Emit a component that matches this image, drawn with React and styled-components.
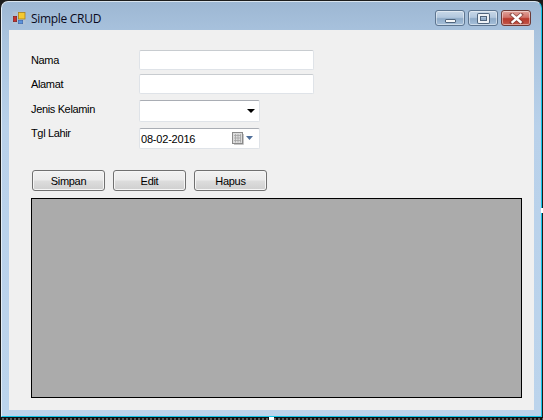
import React from "react";
import styled, { createGlobalStyle } from "styled-components";

const Global = createGlobalStyle`
  html, body { margin: 0; padding: 0; background: #0b0b0b; }
  * { box-sizing: border-box; }
`;

const Screen = styled.div`
  position: relative;
  width: 543px;
  height: 420px;
  overflow: hidden;
  display: flex;
  flex-direction: column;
  background: #1c1c1c;
  font-family: "Liberation Sans", Arial, sans-serif;
`;

const Window = styled.div`
  width: 541px;
  height: 416px;
  margin-left: 1px;
  margin-top: 1px;
  flex: none;
  display: flex;
  flex-direction: column;
  border-radius: 7px 7px 0 0;
  border-left: 1px solid #e4eef7;
  border-right: 1px solid #12c5e8;
  border-bottom: 1px solid #12c5e8;
  border-top: 1px solid #d9e4ee;
  background: linear-gradient(180deg, #9db7d3 0%, #a9c3de 8%, #b9d1ea 30%, #bcd4ec 100%);
`;

const DotRow = styled.div`
  flex: 1;
  border-top: 1px solid #111;
  background: repeating-linear-gradient(90deg, #111 0 2px, #5a5a5a 2px 4px);
`;

const TitleBar = styled.div`
  height: 28px;
  flex: none;
  display: flex;
  align-items: center;
  padding: 4px 10px 0 10px;
`;

const AppIcon = styled.svg`
  width: 14px;
  height: 14px;
  flex: none;
  margin-right: 5px;
`;

const Title = styled.span`
  font-family: "Open Sans", sans-serif;
  font-size: 12px;
  letter-spacing: -0.3px;
  color: #0a0a20;
  flex: 1;
`;

const Caption = styled.div`
  display: flex;
  gap: 3px;
  align-self: flex-start;
  margin-top: 4px;
`;

const CaptionBtn = styled.div`
  width: 30px;
  height: 16px;
  border: 1px solid ${p => (p.$close ? "#6d3a36" : "#5d7590")};
  border-radius: 3px;
  display: flex;
  align-items: center;
  justify-content: center;
  box-shadow: inset 0 0 0 1px rgba(255,255,255,0.45);
  background: ${p =>
    p.$close
      ? "linear-gradient(180deg,#e2a49b 0%,#d0736a 45%,#b8392c 55%,#c2574a 100%)"
      : "linear-gradient(180deg,#c8d8e8 0%,#b3c8de 45%,#8fabc8 55%,#a6c0da 100%)"};
`;

const MinGlyph = styled.div`
  width: 11px;
  height: 4px;
  margin-top: 5px;
  background: #f4f6f8;
  border: 1px solid #50657d;
  border-radius: 1px;
`;

const MaxGlyph = styled.div`
  width: 11px;
  height: 9px;
  background: transparent;
  border: 2px solid #eef2f6;
  outline: 1px solid #50657d;
  outline-offset: -3px;
  box-shadow: 0 0 0 1px #50657d;
  border-radius: 1px;
`;

const Client = styled.div`
  margin: 0 7px 6px 7px;
  flex: 1;
  display: flex;
  flex-direction: column;
  background: #f0f0f0;
  padding: 20px 11px 12px 22px;
`;

const Form = styled.div`
  display: grid;
  grid-template-columns: 108px 175px;
  grid-template-rows: 20px 4px 20px 6px 22px 6px 21px;
`;

const Row = styled.div`
  display: contents;
`;

const Gap = styled.div`
  grid-column: 1 / 3;
  height: ${p => p.$h}px;
`;

const Label = styled.div`
  font-size: 11px;
  color: #000;
  line-height: 20px;
  letter-spacing: -0.35px;
  margin-top: ${p => p.$shift || 0}px;
`;

const Field = styled.div`
  height: ${p => p.$h || 20}px;
  width: ${p => p.$w || 175}px;
  background: #fff;
  border: 1px solid #dfe3e8;
  border-top-color: ${p => (p.$strong ? "#a9adb4" : "#c8ccd0")};
  border-radius: 2px;
  display: flex;
  align-items: center;
  padding: 0 3px 0 1px;
  font-size: 11px;
  letter-spacing: -0.2px;
  color: #000;
`;

const Grow = styled.span`
  flex: 1;
`;

const Arrow = styled.div`
  width: 0;
  height: 0;
  margin-right: 1px;
  border-left: 4px solid transparent;
  border-right: 4px solid transparent;
  border-top: 4px solid #000;
`;

const Buttons = styled.div`
  display: flex;
  gap: 8px;
  margin: 21px 0 7px 1px;
`;

const Button = styled.button`
  width: 73px;
  height: 21px;
  padding: 0;
  border: 1px solid #707070;
  border-radius: 3px;
  font-family: inherit;
  font-size: 11px;
  letter-spacing: -0.3px;
  color: #000;
  background: linear-gradient(180deg, #f2f2f2 0%, #ebebeb 48%, #dddddd 52%, #cfcfcf 100%);
  box-shadow: inset 0 0 0 1px #f6f6f6;
`;

const DataGrid = styled.div`
  width: 491px;
  height: 200px;
  background: #ababab;
  border: 1px solid #000;
`;

const Handle = styled.div`
  position: absolute;
  background: #fff;
  width: ${p => p.$w}px;
  height: ${p => p.$h}px;
  left: ${p => p.$x}px;
  top: ${p => p.$y}px;
`;

export default function App() {
  return (
    <Screen>
      <Global />
      <Window>
        <TitleBar>
          <AppIcon viewBox="0 0 14 14">
            <rect x="0.5" y="0.5" width="13" height="13" fill="#b9c4d2" opacity="0.55" />
            <rect x="6.4" y="1.4" width="6.6" height="6.6" fill="#f5c92f" stroke="#a8801a" strokeWidth="0.8" />
            <rect x="1.3" y="5.3" width="3.4" height="5.4" fill="#c8302a" stroke="#7a1b18" strokeWidth="0.6" />
            <rect x="6.3" y="9.3" width="4.4" height="3.4" fill="#5b93dc" stroke="#3a64a8" strokeWidth="0.6" />
          </AppIcon>
          <Title>Simple CRUD</Title>
          <Caption>
            <CaptionBtn><MinGlyph /></CaptionBtn>
            <CaptionBtn><MaxGlyph /></CaptionBtn>
            <CaptionBtn $close>
              <svg width="15" height="11" viewBox="0 0 15 11">
                <path d="M3 1.5 L12 9.5 M12 1.5 L3 9.5" stroke="#5e2c28" strokeWidth="4" strokeLinecap="square" opacity="0.55" />
                <path d="M3.5 2 L11.5 9 M11.5 2 L3.5 9" stroke="#fff" strokeWidth="2.4" strokeLinecap="square" />
              </svg>
            </CaptionBtn>
          </Caption>
        </TitleBar>
        <Client>
          <Form>
            <Row>
              <Label>Nama</Label>
              <Field />
            </Row>
            <Gap $h={4} />
            <Row>
              <Label>Alamat</Label>
              <Field />
            </Row>
            <Gap $h={6} />
            <Row>
              <Label $shift={-1}>Jenis Kelamin</Label>
              <Field $w={121} $h={22} $strong>
                <Grow />
                <Arrow />
              </Field>
            </Row>
            <Gap $h={6} />
            <Row>
              <Label $shift={-5}>Tgl Lahir</Label>
              <Field $w={121} $h={21} $strong>
                <Grow>08-02-2016</Grow>
                <svg width="24" height="14" viewBox="0 0 24 14">
                  <rect x="0.5" y="0.5" width="10" height="11" fill="#dcdcdc" stroke="#8a8a8a" />
                  <path d="M2 3.5H9M2 6H9M2 8.5H9M3.5 2V10.5M6 2V10.5M8.5 2V10.5" stroke="#a3a3a3" strokeWidth="0.8" />
                  <path d="M11.5 2V12.5H2" fill="none" stroke="#c6c6c6" />
                  <path d="M14 4H21L17.5 8Z" fill="#4f6f9a" />
                </svg>
              </Field>
            </Row>
          </Form>
          <Buttons>
            <Button>Simpan</Button>
            <Button>Edit</Button>
            <Button>Hapus</Button>
          </Buttons>
          <DataGrid />
        </Client>
      </Window>
      <DotRow />
      <Handle $x={541} $y={208} $w={2} $h={5} />
      <Handle $x={269} $y={417} $w={5} $h={3} />
    </Screen>
  );
}
